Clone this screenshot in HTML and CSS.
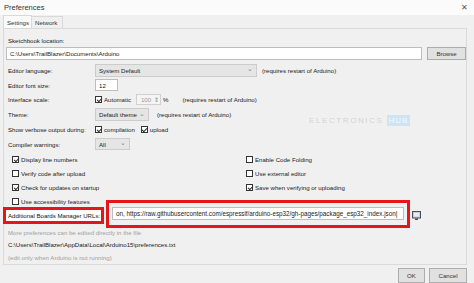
FILE: index.html
```html
<!DOCTYPE html>
<html>
<head>
<meta charset="utf-8">
<link rel="stylesheet" href="styles.css">
</head>
<body>
<div class="win">
  <div class="titlebar">
    <span class="title">Preferences</span>
    <span class="close">✕</span>
  </div>
  <div class="tabs">
    <div class="tab active">Settings</div>
    <div class="tab">Network</div>
  </div>
  <div class="panel">
    <div class="sk-label">Sketchbook location:</div>
    <div class="sk-row">
      <div class="field wide">C:\Users\TrailBlazer\Documents\Arduino</div>
      <div class="btn browse">Browse</div>
    </div>
    <div class="grid">
      <div class="lbl">Editor language:</div>
      <div class="val"><div class="select lang"><span>System Default</span><span class="arrow">⌄</span></div><span class="note">(requires restart of Arduino)</span></div>

      <div class="lbl">Editor font size:</div>
      <div class="val"><div class="field fsize">12</div></div>

      <div class="lbl">Interface scale:</div>
      <div class="val"><span class="cb on"></span><span class="cbtext">Automatic</span><div class="spin"><span>100</span><span class="spinarr">⇕</span></div><span class="pct">%</span><span class="note n2">(requires restart of Arduino)</span></div>

      <div class="lbl">Theme:</div>
      <div class="val"><div class="select theme"><span>Default theme</span><span class="arrow">⌄</span></div><span class="note n3">(requires restart of Arduino)</span></div>

      <div class="lbl">Show verbose output during:</div>
      <div class="val"><span class="cb on"></span><span class="cbtext">compilation</span><span class="cb on cb2"></span><span class="cbtext">upload</span></div>

      <div class="lbl">Compiler warnings:</div>
      <div class="val"><div class="select all"><span>All</span><span class="arrow">⌄</span></div></div>
    </div>
    <div class="checks">
      <div class="ck"><span class="cb on"></span>Display line numbers</div>
      <div class="ck"><span class="cb"></span>Enable Code Folding</div>
      <div class="ck"><span class="cb"></span>Verify code after upload</div>
      <div class="ck"><span class="cb"></span>Use external editor</div>
      <div class="ck"><span class="cb on"></span>Check for updates on startup</div>
      <div class="ck"><span class="cb on"></span>Save when verifying or uploading</div>
      <div class="ck"><span class="cb"></span>Use accessibility features</div>
    </div>
    <div class="url-row">
      <div class="url-lbl">Additional Boards Manager URLs:</div>
      <div class="url-box">
        <div class="field url">on, https://raw.githubusercontent.com/espressif/arduino-esp32/gh-pages/package_esp32_index.json|</div>
      </div>
      <svg class="win-ic" width="10" height="10" viewBox="0 0 10 10"><rect x="0.5" y="0.5" width="8" height="6.5" fill="#c9ccd6" stroke="#4a4f5c"/><rect x="2" y="2" width="5" height="3.5" fill="#e9ebf2"/><rect x="3" y="7.5" width="3" height="1.5" fill="#4a4f5c"/></svg>
    </div>
    <div class="info faint">More preferences can be edited directly in the file</div>
    <div class="info">C:\Users\TrailBlazer\AppData\Local\Arduino15\preferences.txt</div>
    <div class="info faint">(edit only when Arduino is not running)</div>
    <div class="mark"><span class="el">ELECTRONICS</span><span class="hub">HUB</span></div>
  </div>
  <div class="footer">
    <div class="btn ok">OK</div>
    <div class="btn cancel">Cancel</div>
  </div>
</div>
</body>
</html>
```

FILE: styles.css
```css
* { box-sizing: border-box; }
html, body { margin: 0; padding: 0; }
body {
  width: 474px; height: 283px; overflow: hidden;
  background: #f0f0f0;
  font-family: "Liberation Sans", Arial, sans-serif;
  font-size: 6.1px;
  color: #222;
}
.win { width: 474px; height: 283px; position: relative; }
.titlebar {
  height: 15px; background: #fbfbfb;
  display: flex; align-items: center; justify-content: space-between;
  padding: 0 6px 0 4px;
}
.title { font-size: 7.5px; color: #333; }
.close { font-size: 8px; color: #555; }
.tabs { height: 13px; display: flex; padding-left: 3px; align-items: flex-end; }
.tab {
  height: 12px; padding: 0 3px; line-height: 12px;
  border: 1px solid #d9d9d9; border-bottom: none; background: #f0f0f0;
  color: #333; white-space: nowrap;
}
.tab.active { background: #fafafa; height: 13px; line-height: 13px; width: 29px; }
.tab + .tab { width: 31px; border-left: none; }
.panel {
  position: relative;
  margin: 0 7px 0 3px; height: 237px;
  border: 1px solid #dadada; background: #f0f0f0;
  padding: 0 0 0 2px;
}
.sk-label { height: 12px; line-height: 12px; margin-top: 6px; padding-left: 2px; }
.sk-row { display: flex; height: 13px; gap: 5px; }
.field {
  background: #fff; border: 1px solid #bdbdbd;
  line-height: 11px; padding-left: 3px; white-space: nowrap; overflow: hidden;
}
.wide { width: 417px; }
.btn {
  background: #e1e1e1; border: 1px solid #adadad;
  display: flex; align-items: center; justify-content: center;
  color: #333;
}
.browse { width: 39px; height: 13px; }
.grid {
  display: grid; grid-template-columns: 87px 1fr;
  grid-auto-rows: 14.8px; margin-top: 3px; padding-left: 2px;
}
.lbl, .val { display: flex; align-items: center; white-space: nowrap; }
.select {
  background: #e5e5e5; border: 1px solid #cccccc; height: 13px;
  display: flex; align-items: center; justify-content: space-between;
  padding: 0 3px 0 3px;
}
.arrow { color: #888; font-size: 7px; line-height: 7px; margin-top: -3px; }
.lang { width: 162px; }
.note { margin-left: 5px; }
.n2 { margin-left: 14px; }
.n3 { margin-left: 8px; }
.theme { width: 54px; }
.all { width: 35px; height: 12px; }
.fsize { width: 23px; height: 12px; }
.cb {
  display: inline-block; width: 7px; height: 7px;
  border: 1px solid #333; background: #fff; position: relative; flex: none;
}
.cb.on::after {
  content: ""; position: absolute; left: 1.5px; top: 0px;
  width: 2px; height: 4px; border: solid #333; border-width: 0 1px 1px 0;
  transform: rotate(45deg);
}
.cbtext { margin-left: 2px; }
.cb2 { margin-left: 6px; }
.spin {
  margin-left: 5px; width: 25px; height: 11px; border: 1px solid #d0d0d0; background: #f4f4f4;
  display: flex; align-items: center; justify-content: flex-end; color: #999; padding-right: 1px; gap: 3px;
}
.spinarr { font-size: 6px; color: #888; }
.pct { margin-left: 2px; }
.checks {
  display: grid; grid-template-columns: 234px 1fr;
  grid-auto-rows: 14px; margin-top: 1px; padding-left: 6px;
}
.ck { display: flex; align-items: center; gap: 2px; white-space: nowrap; }
.url-row { position: relative; height: 15px; margin-top: -1px; display: flex; align-items: center; }
.url-lbl {
  width: 101px; height: 17px; margin-left: -3px;
  border: 3px solid #e3161b; background: #fff;
  display: flex; align-items: center; padding-left: 2px; white-space: nowrap; color: #111;
}
.url-box {
  position: absolute; left: 100px; top: -8px;
  width: 304px; height: 28px; border: 3px solid #e3161b;
  display: flex; align-items: center; padding-left: 3px;
}
.url { width: 292px; height: 13px; color: #222; font-size: 6.3px; }
.win-ic { position: absolute; left: 406px; top: 3px; }
.info { height: 12.5px; line-height: 12.5px; padding-left: 2px; white-space: nowrap; }
.url-row + .info { margin-top: 4px; }
.faint { color: #a0a0a0; }
.mark {
  position: absolute; left: 305px; top: 86px;
  display: flex; align-items: center; gap: 3px;
  font-size: 8px; letter-spacing: 1.6px; color: #d4d4d4;
}
.hub { background: #cfe3f2; color: #f3f8fc; padding: 1px 2px; letter-spacing: 1px; }
.footer { display: flex; justify-content: flex-end; gap: 4px; padding: 3px 7px 0 0; }
.ok { width: 27px; height: 15px; }
.cancel { width: 38px; height: 15px; }
```
